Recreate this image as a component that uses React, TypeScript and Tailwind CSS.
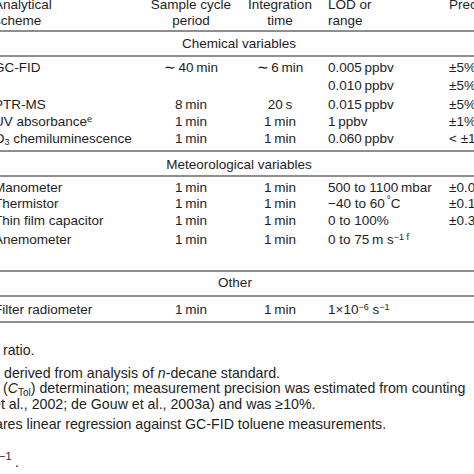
import React from "react";

type Row = {
  name: React.ReactNode;
  cycle?: string;
  integ?: string;
  lod?: React.ReactNode;
  prec?: string;
  h: string;
};

const T = "\u2009";

const chemRows: Row[] = [
  { name: "GC-FID", cycle: `∼${T}40${T}min`, integ: `∼${T}6${T}min`, lod: `0.005${T}ppbv`, prec: "±5%", h: "h-[18px]" },
  { name: "", lod: `0.010${T}ppbv`, prec: "±5%", h: "h-[19px]" },
  { name: "PTR-MS", cycle: `8${T}min`, integ: `20${T}s`, lod: `0.015${T}ppbv`, prec: "±5%", h: "h-[17px]" },
  {
    name: (
      <>
        UV absorbance<sup className="text-[9px]">e</sup>
      </>
    ),
    cycle: `1${T}min`,
    integ: `1${T}min`,
    lod: `1${T}ppbv`,
    prec: "±1%",
    h: "h-[17px]",
  },
  {
    name: (
      <>
        O<sub className="text-[9px]">3</sub> chemiluminescence
      </>
    ),
    cycle: `1${T}min`,
    integ: `1${T}min`,
    lod: `0.060${T}ppbv`,
    prec: "< ±1%",
    h: "h-[17px]",
  },
];

const metRows: Row[] = [
  { name: "Manometer", cycle: `1${T}min`, integ: `1${T}min`, lod: `500 to 1100${T}mbar`, prec: "±0.05%", h: "h-[16px]" },
  {
    name: "Thermistor",
    cycle: `1${T}min`,
    integ: `1${T}min`,
    lod: (
      <>
        −40 to 60<sup className="text-[10px]">{T}°</sup>C
      </>
    ),
    prec: "±0.1°C",
    h: "h-[17px]",
  },
  { name: "Thin film capacitor", cycle: `1${T}min`, integ: `1${T}min`, lod: "0 to 100%", prec: "±0.3%", h: "h-[19px]" },
  {
    name: "Anemometer",
    cycle: `1${T}min`,
    integ: `1${T}min`,
    lod: (
      <>
        0 to 75{T}m s<sup className="text-[9px]">−1 f</sup>
      </>
    ),
    h: "h-[17px]",
  },
];

const otherRows: Row[] = [
  {
    name: "Filter radiometer",
    cycle: `1${T}min`,
    integ: `1${T}min`,
    lod: (
      <>
        1×10<sup className="text-[9px]">−6</sup> s<sup className="text-[9px]">−1</sup>
      </>
    ),
    h: "h-[17px]",
  },
];

function TableRow({ row }: { row: Row }) {
  return (
    <div className={`grid grid-cols-[156px_82px_96px_121px_1fr] w-[560px] ml-[-6px] ${row.h}`}>
      <div>{row.name}</div>
      <div className="text-center">{row.cycle}</div>
      <div className="text-center">{row.integ}</div>
      <div>{row.lod}</div>
      <div>{row.prec}</div>
    </div>
  );
}

function Rule() {
  return <div className="h-[2px] bg-[#8e8e8e] w-full" />;
}

export default function App() {
  return (
    <div
      className="w-[474px] h-[474px] overflow-hidden bg-white text-[#1e1e1e] whitespace-nowrap"
      style={{ fontFamily: '"Liberation Sans", Arial, sans-serif' }}
    >
      <div className="text-[13.5px] leading-[17px]">
        <div className="h-[33px]">
          <div className="grid grid-cols-[156px_82px_96px_121px_1fr] w-[560px] ml-[-6px] mt-[-3px] leading-[16px]">
            <div>
              Analytical
              <br />
              scheme
            </div>
            <div className="text-center">
              Sample cycle
              <br />
              period
            </div>
            <div className="text-center">
              Integration
              <br />
              time
            </div>
            <div>
              LOD or
              <br />
              range
            </div>
            <div>Precision</div>
          </div>
        </div>
        <Rule />
        <div className="h-[23px] pt-[3px] w-[478px] text-center">Chemical variables</div>
        <Rule />
        <div className="h-[93px] pt-[2px]">
          {chemRows.map((r, i) => (
            <TableRow key={i} row={r} />
          ))}
        </div>
        <Rule />
        <div className="h-[23px] pt-[4px] w-[478px] text-center">Meteorological variables</div>
        <Rule />
        <div className="h-[93px] pt-[2px]">
          {metRows.map((r, i) => (
            <TableRow key={i} row={r} />
          ))}
        </div>
        <Rule />
        <div className="h-[23px] pt-[2px] w-[470px] text-center">Other</div>
        <Rule />
        <div className="h-[24px] pt-[4px]">
          {otherRows.map((r, i) => (
            <TableRow key={i} row={r} />
          ))}
        </div>
        <Rule />
      </div>

      <div className="text-[14.2px] leading-[15.5px] pt-[20px]">
        <div className="pl-[3px]">ratio.</div>
        <div className="mt-[7px]">
          <div className="pl-[4px]">
            derived from analysis of <i>n</i>-decane standard.
          </div>
          <div className="pl-[3px]">
            (<i>C</i>
            <sub className="text-[10px]">Tol</sub>) determination; measurement precision was estimated from counting
          </div>
          <div className="ml-[-7px]">et al., 2002; de Gouw et al., 2003a) and was ≥10%.</div>
        </div>
        <div className="mt-[5px] ml-[-5px]">ares linear regression against GC-FID toluene measurements.</div>
        <div className="mt-[18px] h-[11px] text-[11px] leading-[11px] ml-[-1px]">−1</div>
        <div className="mt-[-7px] pl-[15px]">.</div>
      </div>
    </div>
  );
}
